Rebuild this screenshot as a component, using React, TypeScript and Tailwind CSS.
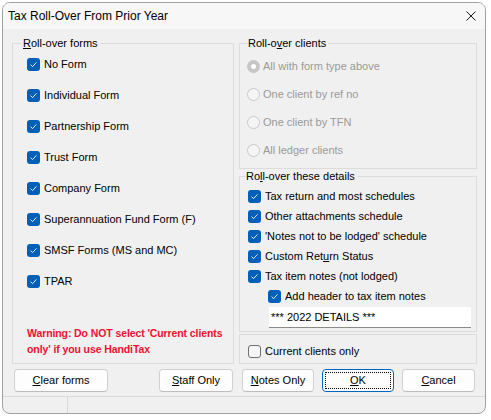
import type { ReactNode } from "react";

const FONT = "font-['Liberation_Sans',Arial,sans-serif]";

function Check({ checked }: { checked: boolean }) {
  if (!checked) {
    return <span className="block w-[13px] h-[13px] shrink-0 rounded-[3px] border border-[#6f6f6f] bg-[#f6f6f6]" />;
  }
  return (
    <span className="flex w-[13px] h-[13px] shrink-0 items-center justify-center rounded-[3px] bg-[#005fb8]">
      <svg width="9" height="9" viewBox="0 0 9 9">
        <path d="M1.6 4.7 L3.6 6.6 L7.4 2.4" stroke="#e8f1fb" strokeWidth="1" fill="none" />
      </svg>
    </span>
  );
}

function Radio({ selected }: { selected?: boolean }) {
  if (selected) {
    return (
      <span className="flex w-[13px] h-[13px] shrink-0 items-center justify-center rounded-full bg-[#c6c6c6]">
        <span className="block w-[5px] h-[5px] rounded-full bg-white" />
      </span>
    );
  }
  return <span className="block w-[13px] h-[13px] shrink-0 rounded-full border border-[#c9c9c9] bg-[#f5f5f5]" />;
}

function CheckRow({ children, checked = true, h = "h-[31px]", indent = "" }: { children: ReactNode; checked?: boolean; h?: string; indent?: string }) {
  return (
    <div className={`flex items-center gap-[3px] ${h} ${indent}`}>
      <Check checked={checked} />
      <span className="ml-[1px]">{children}</span>
    </div>
  );
}

function RadioRow({ children, selected }: { children: ReactNode; selected?: boolean }) {
  return (
    <div className="flex h-[28px] items-center gap-[3px] text-[#9a9a9a]">
      <Radio selected={selected} />
      <span>{children}</span>
    </div>
  );
}

function Btn({ children, w, primary }: { children: ReactNode; w: string; primary?: boolean }) {
  return (
    <div
      className={`${w} h-[23px] rounded-[4px] border bg-[#fdfdfd] flex items-center justify-center ${
        primary ? "border-[#0067c0] p-[2px]" : "border-[#d0d0d0] border-b-[#bdbdbd]"
      }`}
    >
      {primary ? (
        <div className="w-full h-full border border-dotted border-black flex items-center justify-center">{children}</div>
      ) : (
        children
      )}
    </div>
  );
}

const forms = [
  "No Form",
  "Individual Form",
  "Partnership Form",
  "Trust Form",
  "Company Form",
  "Superannuation Fund Form (F)",
  "SMSF Forms (MS and MC)",
  "TPAR",
];

export default function App() {
  return (
    <div className={`min-h-screen bg-white text-[11px] leading-[13px] text-black ${FONT}`}>
      <div className="ml-[2px] mt-[2px] w-[484px] h-[412px] border border-[#a3a3a3] rounded-[8px] bg-[#f0f0f0] overflow-hidden flex flex-col">
        {/* title bar */}
        <div className="h-[26px] shrink-0 bg-[#f7f7f7] flex items-center justify-between pl-[5px] pr-[9px]">
          <span className="text-[12px]">Tax Roll-Over From Prior Year</span>
          <svg width="10" height="10" viewBox="0 0 10 10">
            <path d="M0.5 0.5 L9.5 9.5 M9.5 0.5 L0.5 9.5" stroke="#1b1b1b" strokeWidth="1" />
          </svg>
        </div>

        {/* body */}
        <div className="flex gap-[5px] pl-[9px] mt-[8px]">
          <fieldset className="w-[222px] h-[327px] shrink-0 border border-[#dcdcdc] pl-[14px] overflow-hidden">
            <legend className="ml-[-6px] px-[2px] leading-[12px]">
              <u className="underline-offset-[1px]">R</u>oll-over forms
            </legend>
            {forms.map((f) => (
              <CheckRow key={f}>{f}</CheckRow>
            ))}
            <div className="mt-[28px] text-[#ee1133] font-bold text-[10.5px] leading-[16px] whitespace-nowrap tracking-[-0.1px]">
              Warning: Do NOT select 'Current clients
              <br />
              only' if you use HandiTax
            </div>
          </fieldset>

          <div className="w-[238px] shrink-0 flex flex-col">
            <fieldset className="h-[132px] border border-[#dcdcdc] pl-[7px]">
              <legend className="ml-[1px] pr-[2px] leading-[12px]">
                Roll-o<u className="underline-offset-[1px]">v</u>er clients
              </legend>
              <div className="mt-[3px]">
                <RadioRow selected>All with form type above</RadioRow>
                <RadioRow>One client by ref no</RadioRow>
                <RadioRow>One client by TFN</RadioRow>
                <RadioRow>All ledger clients</RadioRow>
              </div>
            </fieldset>

            <fieldset className="mt-[1px] h-[162px] border border-[#dcdcdc] pl-[8px] pr-[5px]">
              <legend className="ml-[-2px] pr-[2px] leading-[12px]">
                Ro<u className="underline-offset-[1px]">l</u>l-over these details
              </legend>
              <div className="mt-[4px]">
                <CheckRow h="h-[20px]">Tax return and most schedules</CheckRow>
                <CheckRow h="h-[20px]">Other attachments schedule</CheckRow>
                <CheckRow h="h-[20px]">'Notes not to be lodged' schedule</CheckRow>
                <CheckRow h="h-[20px]">
                  Custom Ret<u className="underline-offset-[1px]">u</u>rn Status
                </CheckRow>
                <CheckRow h="h-[20px]">Tax item notes (not lodged)</CheckRow>
                <CheckRow h="h-[20px]" indent="pl-[20px]">
                  Add header to tax item notes
                </CheckRow>
                <div className="ml-[21px] mt-[1px] h-[21px] bg-white border-b border-[#8a8a8a] flex items-center pl-[2px]">
                  *** 2022 DETAILS ***
                </div>
              </div>
            </fieldset>

            <div className="mt-[2px] h-[30px] border border-[#dcdcdc] pl-[8px] pt-[5px] flex items-center">
              <Check checked={false} />
              <span className="ml-[4px]">Current clients only</span>
            </div>
          </div>
        </div>

        {/* buttons */}
        <div className="mt-[5px] pl-[11px] flex">
          <Btn w="w-[94px]">
            <span>
              <u className="underline-offset-[1px]">C</u>lear forms
            </span>
          </Btn>
          <div className="ml-[51px]">
            <Btn w="w-[74px]">
              <span>
                <u className="underline-offset-[1px]">S</u>taff Only
              </span>
            </Btn>
          </div>
          <div className="ml-[9px]">
            <Btn w="w-[72px]">
              <span>
                <u className="underline-offset-[1px]">N</u>otes Only
              </span>
            </Btn>
          </div>
          <div className="ml-[8px]">
            <Btn w="w-[72px]" primary>
              <span>
                <u className="underline-offset-[1px]">O</u>K
              </span>
            </Btn>
          </div>
          <div className="ml-[8px]">
            <Btn w="w-[73px]">
              <span>
                <u className="underline-offset-[1px]">C</u>ancel
              </span>
            </Btn>
          </div>
        </div>

        {/* status bar */}
        <div className="mt-[4px] flex-1 border-t border-[#dadada] flex">
          <div className="w-[65px] border-r border-[#dadada]" />
        </div>
      </div>
    </div>
  );
}
